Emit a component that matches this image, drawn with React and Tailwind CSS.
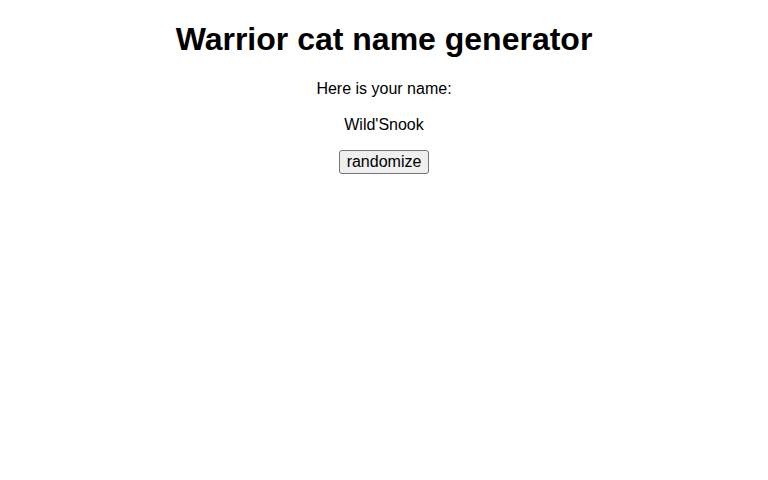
import { useState } from "react";

const prefixes = ["Wild", "Storm", "Fire", "Bramble", "Dust", "Moss", "Thorn", "Hawk"];
const suffixes = ["'Snook", "pelt", "claw", "heart", "fur", "tail", "whisker", "stripe"];

export default function App() {
    const [name, setName] = useState("Wild'Snook");

    const randomize = () => {
        const p = prefixes[Math.floor(Math.random() * prefixes.length)];
        const s = suffixes[Math.floor(Math.random() * suffixes.length)];
        setName(p + s);
    };

    return (
        <div className="min-h-screen bg-white text-black text-center font-['Liberation_Sans',Arial,sans-serif]">
            <h1 className="pt-[21px] text-[32px] leading-[37px] font-bold">Warrior cat name generator</h1>
            <p className="mt-[22px] text-base leading-[18px]">Here is your name:</p>
            <p className="mt-[18px] text-base leading-[18px]">{name}</p>
            <div className="mt-[16px] flex justify-center">
                <button
                    onClick={randomize}
                    className="h-[24px] px-[7px] text-base leading-[18px] bg-[#efefef] border border-[#767676] rounded-[3px] hover:bg-[#e5e5e5]"
                >
                    randomize
                </button>
            </div>
        </div>
    );
}
